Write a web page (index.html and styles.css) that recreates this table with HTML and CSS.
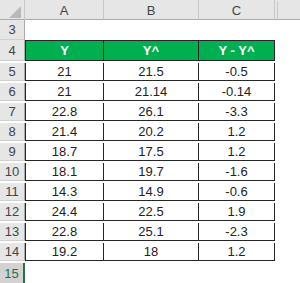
FILE: index.html
```html
<!DOCTYPE html>
<html>
<head>
<meta charset="utf-8">
<link rel="stylesheet" href="styles.css">
</head>
<body>
<div class="sheet">
  <div class="row colhead">
    <div class="corner"><span class="tri"></span></div>
    <div class="ch">A</div>
    <div class="ch">B</div>
    <div class="ch">C</div>
    <div class="ch chd"><span class="gap"></span></div>
  </div>
  <div class="row"><div class="rh">3</div><div class="blank"></div></div>
  <div class="row head4"><div class="rh">4</div><div class="c g first">Y</div><div class="c g">Y^</div><div class="c g">Y - Y^</div><div class="blank"></div></div>
  <div class="row"><div class="rh">5</div><div class="c first">21</div><div class="c">21.5</div><div class="c">-0.5</div><div class="blank"></div></div>
  <div class="row"><div class="rh">6</div><div class="c first">21</div><div class="c">21.14</div><div class="c">-0.14</div><div class="blank"></div></div>
  <div class="row"><div class="rh">7</div><div class="c first">22.8</div><div class="c">26.1</div><div class="c">-3.3</div><div class="blank"></div></div>
  <div class="row"><div class="rh">8</div><div class="c first">21.4</div><div class="c">20.2</div><div class="c">1.2</div><div class="blank"></div></div>
  <div class="row"><div class="rh">9</div><div class="c first">18.7</div><div class="c">17.5</div><div class="c">1.2</div><div class="blank"></div></div>
  <div class="row"><div class="rh">10</div><div class="c first">18.1</div><div class="c">19.7</div><div class="c">-1.6</div><div class="blank"></div></div>
  <div class="row"><div class="rh">11</div><div class="c first">14.3</div><div class="c">14.9</div><div class="c">-0.6</div><div class="blank"></div></div>
  <div class="row"><div class="rh">12</div><div class="c first">24.4</div><div class="c">22.5</div><div class="c">1.9</div><div class="blank"></div></div>
  <div class="row"><div class="rh">13</div><div class="c first">22.8</div><div class="c">25.1</div><div class="c">-2.3</div><div class="blank"></div></div>
  <div class="row"><div class="rh">14</div><div class="c first">19.2</div><div class="c">18</div><div class="c">1.2</div><div class="blank"></div></div>
  <div class="row sel"><div class="rh">15</div><div class="blank"></div></div>
</div>
</body>
</html>
```
FILE: styles.css
```css
* { box-sizing: border-box; }
html, body { margin: 0; padding: 0; background: #fff; }
body { font-family: "Liberation Sans", Arial, sans-serif; width: 300px; height: 283px; overflow: hidden; }

.sheet { width: 300px; }

.row {
  display: grid;
  grid-template-columns: 25px 79px 95px 76px 25px;
  height: 20px;
}
.row.head4 { height: 23px; }

.colhead {
  background: #e6e6e6;
  border-bottom: 1px solid #ababab;
}
.corner {
  position: relative;
  border-right: 1px solid #c8c8c8;
}
.tri {
  position: absolute;
  right: 3px;
  bottom: 2px;
  width: 0;
  height: 0;
  border-left: 12px solid transparent;
  border-bottom: 12px solid #b9b9b9;
}
.ch {
  display: flex;
  align-items: center;
  justify-content: center;
  font-size: 13px;
  color: #444;
  border-right: 1px solid #c8c8c8;
  padding-top: 1px;
}
.chd {
  border-right: none;
  justify-content: flex-start;
}
.gap {
  width: 3px;
  height: 19px;
  border-right: 1px solid #c8c8c8;
}

.rh {
  display: flex;
  align-items: center;
  justify-content: center;
  background: #e6e6e6;
  color: #444;
  font-size: 13px;
  border-right: 1px solid #ababab;
  border-bottom: 1px solid #d0d0d0;
}
.blank { grid-column: 2 / -1; }

.c {
  display: flex;
  align-items: center;
  justify-content: center;
  font-size: 13px;
  color: #222;
  border-right: 1px solid #262626;
  border-bottom: 1px solid #262626;
}
.c.g {
  background: #00b050;
  color: #fff;
  font-weight: bold;
  border-top: 1px solid #262626;
  padding-top: 1px;
}
.head4 .rh { padding-top: 1px; }
.c.first { border-left: 1px solid #262626; }

.sel .rh {
  background: #d2d2d2;
  color: #217346;
  border-right: 2px solid #217346;
  border-bottom: none;
}
```
